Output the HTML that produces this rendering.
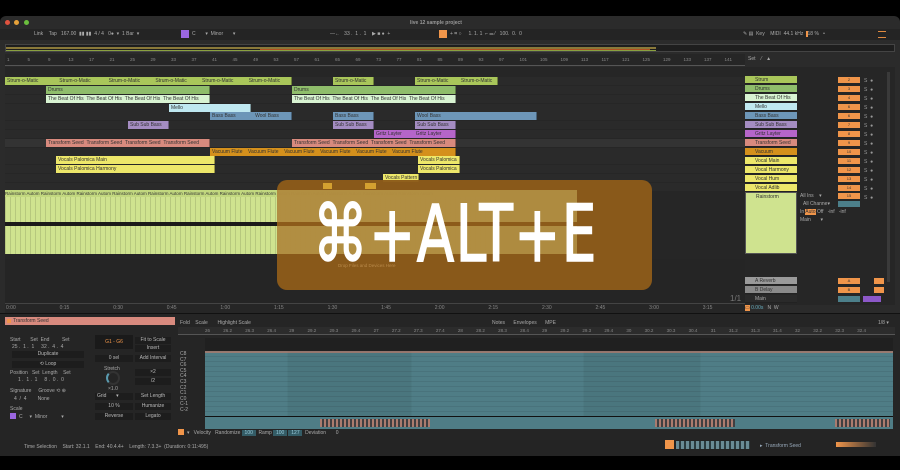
<!DOCTYPE html>
<html><head><meta charset="utf-8"><style>
*{margin:0;padding:0;box-sizing:border-box}
body{width:900px;height:470px;background:#000;position:relative;overflow:hidden;font-family:"Liberation Sans",sans-serif;font-size:5px;color:#bbb}
.a{position:absolute}
.c{position:absolute;height:8px;font-size:5px;line-height:8px;padding-left:2px;color:#333;white-space:nowrap;overflow:hidden;border-right:1px solid rgba(0,0,0,.35)}
.row{position:absolute;left:5px;width:740px;height:8px;background:#2a2a2a}
.th{position:absolute;left:745px;width:52px;height:8px;font-size:5px;line-height:8px;padding-left:10px;color:#333;border-bottom:1px solid #222}
.num{position:absolute;left:838px;width:22px;height:6px;background:#f0954a;color:#333;font-size:4px;text-align:center;line-height:6px}
.lbl{position:absolute;font-size:5px;color:#aaa;white-space:nowrap}
.btn{position:absolute;background:#1d1d1d;color:#bbb;font-size:5px;text-align:center;line-height:7px;height:7px}
.rl span{display:inline-block;width:20.5px}
.tl span{display:inline-block;width:53.6px}
</style></head><body>
<div class="a" style="left:0;top:16px;width:900px;height:440px;background:#2b2b2b;border-radius:6px 6px 0 0"></div>
<div class="a" style="left:5px;top:20px;width:5px;height:5px;border-radius:50%;background:#e0533f"></div>
<div class="a" style="left:14px;top:20px;width:5px;height:5px;border-radius:50%;background:#e6a23a"></div>
<div class="a" style="left:24px;top:20px;width:5px;height:5px;border-radius:50%;background:#6bbf3e"></div>
<div class="lbl" style="left:410px;top:20px;color:#999;font-weight:bold">live 12 sample project</div>
<div class="a" style="left:0;top:29px;width:900px;height:11px;background:#242424"></div>
<div class="lbl" style="left:34px;top:31px">Link&nbsp;&nbsp;&nbsp;&nbsp;Tap&nbsp;&nbsp;&nbsp;167.00&nbsp;&nbsp;▮▮ ▮▮&nbsp;&nbsp;4 / 4&nbsp;&nbsp;&nbsp;0●&nbsp;&nbsp;▾&nbsp;&nbsp;1 Bar&nbsp;&nbsp;▾</div>
<div class="a" style="left:181px;top:30px;width:8px;height:8px;background:#9a66e0"></div>
<div class="lbl" style="left:192px;top:31px">C&nbsp;&nbsp;&nbsp;&nbsp;&nbsp;&nbsp;&nbsp;▾&nbsp;&nbsp;Minor&nbsp;&nbsp;&nbsp;&nbsp;&nbsp;&nbsp;&nbsp;▾</div>
<div class="lbl" style="left:330px;top:31px">—←&nbsp;&nbsp;&nbsp;33 .&nbsp;&nbsp;1 .&nbsp;&nbsp;1&nbsp;&nbsp;&nbsp;&nbsp;▶&nbsp;■&nbsp;●&nbsp;&nbsp;+</div>
<div class="a" style="left:439px;top:30px;width:8px;height:8px;background:#f0954a"></div>
<div class="lbl" style="left:450px;top:31px">+ ⌗ ○&nbsp;&nbsp;&nbsp;&nbsp;&nbsp;1.&nbsp;1.&nbsp;1&nbsp;&nbsp;⌐ ▭ ⁄&nbsp;&nbsp;&nbsp;100.&nbsp;&nbsp;0.&nbsp;&nbsp;0</div>
<div class="lbl" style="left:743px;top:31px">✎ ▤&nbsp;&nbsp;Key&nbsp;&nbsp;&nbsp;&nbsp;MIDI&nbsp;&nbsp;44.1 kHz&nbsp;&nbsp;<span style="background:#f0954a">&nbsp;</span>18 %&nbsp;&nbsp;&nbsp;•</div>
<div class="a" style="left:878px;top:31px;width:8px;height:7px;border-top:1px solid #e08a40;border-bottom:1px solid #e08a40"></div>
<div class="a" style="left:5px;top:44px;width:890px;height:8px;background:#1e1e1e;border:1px solid #444"></div>
<div class="a" style="left:6px;top:47px;width:650px;height:2px;background:#8a7a3a"></div>
<div class="a" style="left:260px;top:49px;width:390px;height:1px;background:#b05020"></div>
<div class="a" style="left:6px;top:50px;width:650px;height:1px;background:#8aa040"></div>
<div class="a" style="left:5px;top:54px;width:740px;height:12px;background:#262626;border-bottom:1px solid #555"></div>
<div class="lbl rl" style="left:7px;top:57px;font-size:4.5px;color:#888"><span>1</span><span>5</span><span>9</span><span>13</span><span>17</span><span>21</span><span>25</span><span>29</span><span>33</span><span>37</span><span>41</span><span>45</span><span>49</span><span>53</span><span>57</span><span>61</span><span>65</span><span>69</span><span>73</span><span>77</span><span>81</span><span>85</span><span>89</span><span>93</span><span>97</span><span>101</span><span>105</span><span>109</span><span>113</span><span>117</span><span>121</span><span>125</span><span>129</span><span>133</span><span>137</span><span>141</span></div>
<div class="lbl" style="left:748px;top:56px">Set&nbsp;&nbsp;&nbsp;&nbsp;⁄&nbsp;&nbsp;&nbsp;▲</div>
<div class="a" style="left:5px;top:67px;width:740px;height:238px;background:#262626"></div>
<div class="row" style="top:77px"></div><div class="row" style="top:86px"></div><div class="row" style="top:95px"></div><div class="row" style="top:104px"></div><div class="row" style="top:112px"></div><div class="row" style="top:121px"></div><div class="row" style="top:130px"></div><div class="row" style="top:139px;background:#333"></div><div class="row" style="top:148px"></div><div class="row" style="top:156px"></div><div class="row" style="top:165px"></div><div class="row" style="top:174px"></div><div class="row" style="top:183px"></div>
<div class="row" style="top:259px;height:44px;background:#252525"></div>
<div class="c" style="top:77px;left:5px;width:287px;background:#a9c65a">Strum-o-Matic&nbsp;&nbsp;&nbsp;&nbsp;&nbsp;&nbsp;&nbsp;&nbsp;&nbsp;&nbsp;&nbsp;&nbsp;&nbsp;&nbsp;&nbsp;Strum-o-Matic&nbsp;&nbsp;&nbsp;&nbsp;&nbsp;&nbsp;&nbsp;&nbsp;&nbsp;&nbsp;&nbsp;&nbsp;&nbsp;Strum-o-Matic&nbsp;&nbsp;&nbsp;&nbsp;&nbsp;&nbsp;&nbsp;&nbsp;&nbsp;&nbsp;&nbsp;Strum-o-Matic&nbsp;&nbsp;&nbsp;&nbsp;&nbsp;&nbsp;&nbsp;&nbsp;&nbsp;&nbsp;&nbsp;Strum-o-Matic&nbsp;&nbsp;&nbsp;&nbsp;&nbsp;&nbsp;&nbsp;&nbsp;&nbsp;&nbsp;&nbsp;Strum-o-Matic&nbsp;&nbsp;&nbsp;&nbsp;&nbsp;&nbsp;&nbsp;&nbsp;&nbsp;&nbsp;&nbsp;Strum-o-Matic</div>
<div class="c" style="top:77px;left:333px;width:41px;background:#a9c65a">Strum-o-Matic</div>
<div class="c" style="top:77px;left:415px;width:83px;background:#a9c65a">Strum-o-Matic&nbsp;&nbsp;&nbsp;&nbsp;&nbsp;&nbsp;&nbsp;&nbsp;&nbsp;Strum-o-Matic</div>
<div class="c" style="top:86px;left:46px;width:164px;background:#8fbd6b">Drums</div>
<div class="c" style="top:86px;left:292px;width:164px;background:#8fbd6b">Drums</div>
<div class="c" style="top:95px;left:46px;width:164px;background:#d8f3d2">The Beat Of His&nbsp;&nbsp;The Beat Of His&nbsp;&nbsp;The Beat Of His&nbsp;&nbsp;The Beat Of His</div>
<div class="c" style="top:95px;left:292px;width:164px;background:#d8f3d2">The Beat Of His&nbsp;&nbsp;The Beat Of His&nbsp;&nbsp;The Beat Of His&nbsp;&nbsp;The Beat Of His</div>
<div class="c" style="top:104px;left:169px;width:82px;background:#bfe8f0">Mello</div>
<div class="c" style="top:112px;left:210px;width:82px;background:#6d96b8">Bass Bass&nbsp;&nbsp;&nbsp;&nbsp;&nbsp;&nbsp;&nbsp;&nbsp;&nbsp;&nbsp;&nbsp;&nbsp;&nbsp;&nbsp;Wool Bass</div>
<div class="c" style="top:112px;left:333px;width:41px;background:#6d96b8">Bass Bass</div>
<div class="c" style="top:112px;left:415px;width:122px;background:#6d96b8">Wool Bass</div>
<div class="c" style="top:121px;left:128px;width:41px;background:#a48cc2">Sub Sub Bass</div>
<div class="c" style="top:121px;left:333px;width:41px;background:#a48cc2">Sub Sub Bass</div>
<div class="c" style="top:121px;left:415px;width:41px;background:#a48cc2">Sub Sub Bass</div>
<div class="c" style="top:130px;left:374px;width:82px;background:#b565c9">Gritz Layter&nbsp;&nbsp;&nbsp;&nbsp;&nbsp;&nbsp;&nbsp;&nbsp;&nbsp;&nbsp;Gritz Layter</div>
<div class="c" style="top:139px;left:46px;width:164px;background:#d88a7e">Transform Seed&nbsp;&nbsp;Transform Seed&nbsp;&nbsp;Transform Seed&nbsp;&nbsp;Transform Seed</div>
<div class="c" style="top:139px;left:292px;width:164px;background:#d88a7e">Transform Seed&nbsp;&nbsp;Transform Seed&nbsp;&nbsp;Transform Seed&nbsp;&nbsp;Transform Seed</div>
<div class="c" style="top:148px;left:210px;width:246px;background:#d4901c">Vacuum Flute&nbsp;&nbsp;&nbsp;&nbsp;Vacuum Flute&nbsp;&nbsp;&nbsp;&nbsp;Vacuum Flute&nbsp;&nbsp;&nbsp;&nbsp;Vacuum Flute&nbsp;&nbsp;&nbsp;&nbsp;Vacuum Flute&nbsp;&nbsp;&nbsp;&nbsp;Vacuum Flute</div>
<div class="c" style="top:156px;left:56px;width:159px;background:#ede76a">Vocals Palomica Main</div>
<div class="c" style="top:156px;left:418px;width:42px;background:#ede76a">Vocals Palomica</div>
<div class="c" style="top:165px;left:56px;width:159px;background:#ede76a">Vocals Palomica Harmony</div>
<div class="c" style="top:165px;left:418px;width:42px;background:#ede76a">Vocals Palomica</div>
<div class="c" style="top:174px;left:383px;width:36px;background:#ede76a">Vocals Pattern</div>
<div class="a" style="left:5px;top:190px;width:495px;height:64px;background:#cfe38f;background-image:repeating-linear-gradient(90deg,rgba(0,0,0,.12) 0 1px,transparent 1px 5px)"></div>
<div class="a" style="left:5px;top:190px;width:495px;height:7px;background:#c2d87f;font-size:4.5px;color:#333;line-height:7px;white-space:nowrap;overflow:hidden">Rainstorm Autom Rainstorm Autom Rainstorm Autom Rainstorm Autom Rainstorm Autom Rainstorm Autom Rainstorm Autom Rainstorm Autom Rainstorm Autom Rainstorm Autom Rainstorm Autom Rainstorm Autom</div>
<div class="a" style="left:5px;top:222px;width:495px;height:4px;background:#1a1a1a"></div>
<div class="a" style="left:5px;top:303px;width:740px;height:10px;background:#262626;border-top:1px solid #444"></div>
<div class="lbl tl" style="left:6px;top:305px;color:#888"><span>0:00</span><span>0:15</span><span>0:30</span><span>0:45</span><span>1:00</span><span>1:15</span><span>1:30</span><span>1:45</span><span>2:00</span><span>2:15</span><span>2:30</span><span>2:45</span><span>3:00</span><span>3:15</span></div>
<div class="a" style="left:745px;top:67px;width:150px;height:238px;background:#262626"></div>
<div class="th" style="top:76px;background:#a9c65a">Strum</div>
<div class="th" style="top:85px;background:#8fbd6b">Drums</div>
<div class="th" style="top:94px;background:#d8f3d2">The Beat Of His</div>
<div class="th" style="top:103px;background:#bfe8f0">Mello</div>
<div class="th" style="top:112px;background:#6d96b8">Bass Bass</div>
<div class="th" style="top:121px;background:#a48cc2">Sub Sub Bass</div>
<div class="th" style="top:130px;background:#b565c9">Gritz Layter</div>
<div class="th" style="top:139px;background:#d88a7e">Transform Seed</div>
<div class="th" style="top:148px;background:#d4901c">Vacuum</div>
<div class="th" style="top:157px;background:#ede76a">Vocal Main</div>
<div class="th" style="top:166px;background:#ede76a">Vocal Harmony</div>
<div class="th" style="top:175px;background:#ede76a">Vocal Hum</div>
<div class="th" style="top:184px;background:#ede76a">Vocal Adlib</div>
<div class="th" style="top:192px;height:62px;background:#cfe38f;border:1px solid #555">Rainstorm</div>
<div class="num" style="top:77px">2</div><div class="num" style="top:86px">3</div><div class="num" style="top:95px">4</div><div class="num" style="top:104px">6</div><div class="num" style="top:113px">6</div><div class="num" style="top:122px">7</div><div class="num" style="top:131px">8</div><div class="num" style="top:140px">9</div><div class="num" style="top:149px">10</div><div class="num" style="top:158px">11</div><div class="num" style="top:167px">12</div><div class="num" style="top:176px">13</div><div class="num" style="top:185px">14</div><div class="num" style="top:193px">15</div>
<div class="lbl" style="left:864px;top:77px;line-height:9px;color:#999">S&nbsp;&nbsp;●<br>S&nbsp;&nbsp;●<br>S&nbsp;&nbsp;●<br>S&nbsp;&nbsp;●<br>S&nbsp;&nbsp;●<br>S&nbsp;&nbsp;●<br>S&nbsp;&nbsp;●<br>S&nbsp;&nbsp;●<br>S&nbsp;&nbsp;●<br>S&nbsp;&nbsp;●<br>S&nbsp;&nbsp;●<br>S&nbsp;&nbsp;●<br>S&nbsp;&nbsp;●<br>S&nbsp;&nbsp;●</div>
<div class="lbl" style="left:800px;top:193px">All Ins&nbsp;&nbsp;&nbsp;&nbsp;▾</div>
<div class="lbl" style="left:803px;top:201px">All Channe▾</div>
<div class="a" style="left:838px;top:201px;width:22px;height:6px;background:#4c7f8a"></div>
<div class="lbl" style="left:800px;top:209px">In <span style="background:#f0954a;color:#333">Auto</span> Off&nbsp;&nbsp;&nbsp;-inf&nbsp;&nbsp;&nbsp;-inf</div>
<div class="lbl" style="left:800px;top:217px">Main&nbsp;&nbsp;&nbsp;&nbsp;&nbsp;&nbsp;&nbsp;▾</div>
<div class="a" style="left:887px;top:72px;width:3px;height:210px;background:#3a3a3a"></div>
<div class="th" style="top:277px;background:#9a9a9a">A Reverb</div>
<div class="th" style="top:286px;background:#8a8a8a">B Delay</div>
<div class="lbl" style="left:730px;top:294px;font-size:8px;color:#777">1/1</div>
<div class="th" style="top:295px;background:#2a2a2a;color:#aaa">Main</div>
<div class="num" style="top:278px">A</div><div class="num" style="top:287px">B</div>
<div class="a" style="left:838px;top:296px;width:22px;height:6px;background:#4c7f8a"></div>
<div class="a" style="left:863px;top:296px;width:18px;height:6px;background:#8c58c8"></div>
<div class="a" style="left:874px;top:278px;width:10px;height:6px;background:#f0954a"></div>
<div class="a" style="left:874px;top:287px;width:10px;height:6px;background:#f0954a"></div>
<div class="lbl" style="left:745px;top:305px"><span style="background:#f0954a;color:#333">▭</span> <span style="color:#6ab">0.00s</span>&nbsp;&nbsp;&nbsp;N&nbsp;&nbsp;W</div>
<!-- overlay -->
<div class="a" style="left:277px;top:180px;width:375px;height:110px;background:#8c5b1a;border-radius:10px;opacity:.97"></div>
<div class="a" style="left:277px;top:190px;width:300px;height:64px;background:rgba(220,200,110,.45)"></div>
<div class="a" style="left:277px;top:222px;width:300px;height:4px;background:#8c5b1a"></div>
<div class="a" style="left:323px;top:183px;width:9px;height:6px;background:#d4a030"></div>
<div class="a" style="left:365px;top:183px;width:11px;height:6px;background:#d4a030"></div>
<div class="a" style="left:313px;top:185px;width:350px;font-size:78px;line-height:100px;color:#fff;font-family:'Liberation Sans Narrow','DejaVu Sans Condensed',sans-serif;transform:scaleX(.78);transform-origin:left;white-space:nowrap;letter-spacing:2px;-webkit-text-stroke:1.5px #fff">⌘+ALT+E</div>
<div class="lbl" style="left:338px;top:263px;color:#b98a4a;font-size:4.5px">Drop Files and Devices Here</div>
<!-- bottom panel -->
<div class="a" style="left:0;top:313px;width:900px;height:143px;background:#252525;border-top:1px solid #111"></div>
<div class="a" style="left:5px;top:317px;width:170px;height:8px;background:#d88a7e;font-size:5px;line-height:8px;color:#333;padding-left:8px">Transform Seed</div>
<div class="a" style="left:7px;top:319px;width:4px;height:4px;background:#f0954a"></div>
<div class="lbl" style="left:10px;top:337px">Start&nbsp;&nbsp;&nbsp;&nbsp;&nbsp;&nbsp;&nbsp;Set&nbsp;&nbsp;End&nbsp;&nbsp;&nbsp;&nbsp;&nbsp;&nbsp;&nbsp;&nbsp;&nbsp;Set</div>
<div class="lbl" style="left:12px;top:344px">25 .&nbsp;&nbsp;1 .&nbsp;&nbsp;1&nbsp;&nbsp;&nbsp;&nbsp;&nbsp;32 .&nbsp;&nbsp;4 .&nbsp;&nbsp;4</div>
<div class="btn" style="left:12px;top:351px;width:72px">Duplicate</div>
<div class="btn" style="left:12px;top:361px;width:72px">⟲ Loop</div>
<div class="lbl" style="left:10px;top:370px">Position&nbsp;&nbsp;&nbsp;Set&nbsp;&nbsp;Length&nbsp;&nbsp;&nbsp;&nbsp;Set</div>
<div class="lbl" style="left:18px;top:377px">1 .&nbsp;&nbsp;1 .&nbsp;&nbsp;1&nbsp;&nbsp;&nbsp;&nbsp;&nbsp;8 .&nbsp;&nbsp;0 .&nbsp;&nbsp;0</div>
<div class="lbl" style="left:10px;top:388px">Signature&nbsp;&nbsp;&nbsp;&nbsp;&nbsp;Groove ⟲ ⊕</div>
<div class="lbl" style="left:14px;top:396px">4&nbsp;&nbsp;/&nbsp;&nbsp;4&nbsp;&nbsp;&nbsp;&nbsp;&nbsp;&nbsp;&nbsp;&nbsp;None</div>
<div class="lbl" style="left:10px;top:406px">Scale</div>
<div class="a" style="left:10px;top:413px;width:6px;height:6px;background:#9a66e0"></div>
<div class="lbl" style="left:19px;top:414px">C&nbsp;&nbsp;&nbsp;&nbsp;&nbsp;▾&nbsp;&nbsp;Minor&nbsp;&nbsp;&nbsp;&nbsp;&nbsp;&nbsp;&nbsp;&nbsp;&nbsp;&nbsp;▾</div>
<div class="a" style="left:95px;top:335px;width:38px;height:14px;background:#1a1a1a;color:#f0954a;font-size:5px;text-align:center;line-height:14px">G1 - G6</div>
<div class="btn" style="left:135px;top:337px;width:36px">Fit to Scale</div>
<div class="btn" style="left:135px;top:345px;width:36px">Insert</div>
<div class="btn" style="left:95px;top:355px;width:38px">0 sel</div>
<div class="btn" style="left:135px;top:355px;width:36px">Add Interval</div>
<div class="lbl" style="left:104px;top:366px">Stretch</div>
<div class="a" style="left:106px;top:371px;width:14px;height:14px;border-radius:50%;border:2px solid #333;border-left-color:#5a9bb0"></div>
<div class="lbl" style="left:108px;top:386px">×1.0</div>
<div class="btn" style="left:135px;top:369px;width:36px">×2</div>
<div class="btn" style="left:135px;top:378px;width:36px">/2</div>
<div class="btn" style="left:95px;top:393px;width:38px;text-align:left;padding-left:2px">Grid&nbsp;&nbsp;&nbsp;&nbsp;&nbsp;&nbsp;&nbsp;▾</div>
<div class="btn" style="left:135px;top:393px;width:36px">Set Length</div>
<div class="btn" style="left:95px;top:403px;width:38px">10 %</div>
<div class="btn" style="left:135px;top:403px;width:36px">Humanize</div>
<div class="btn" style="left:95px;top:413px;width:38px">Reverse</div>
<div class="btn" style="left:135px;top:413px;width:36px">Legato</div>
<div class="lbl" style="left:180px;top:320px">Fold&nbsp;&nbsp;&nbsp;&nbsp;Scale&nbsp;&nbsp;&nbsp;&nbsp;&nbsp;&nbsp;&nbsp;Highlight Scale</div>
<div class="lbl" style="left:492px;top:320px">Notes&nbsp;&nbsp;&nbsp;&nbsp;&nbsp;&nbsp;Envelopes&nbsp;&nbsp;&nbsp;&nbsp;&nbsp;&nbsp;MPE</div>
<div class="lbl" style="left:878px;top:320px">1/8 ▾</div>
<div class="a" style="left:178px;top:327px;width:717px;height:8px;background:#2c2c2c;border-bottom:1px solid #555"></div>
<div class="lbl" style="left:205px;top:328px;color:#888;font-size:4.5px;word-spacing:12px">26 26.2 26.3 26.4 29 29.2 29.3 29.4 27 27.2 27.3 27.4 28 28.2 28.3 28.4 29 29.2 29.3 29.4 30 30.2 30.3 30.4 31 31.2 31.3 31.4 32 32.2 32.3 32.4</div>
<div class="a" style="left:205px;top:338px;width:688px;height:13px;background:#202020"></div>
<div class="lbl" style="left:180px;top:352px;line-height:5.6px;color:#aaa">C8<br>C7<br>C6<br>C5<br>C4<br>C3<br>C2<br>C1<br>C0<br>C-1<br>C-2</div>
<div class="a" style="left:205px;top:351px;width:688px;height:65px;background:#4f7d86;background-image:linear-gradient(90deg,transparent 0 12%,rgba(0,0,0,.06) 12% 30%,transparent 30% 55%,rgba(0,0,0,.06) 55% 72%,transparent 72%),repeating-linear-gradient(180deg,rgba(0,0,0,.08) 0 1px,transparent 1px 5px)"></div>
<div class="a" style="left:205px;top:351px;width:688px;height:2px;background:#c97a66;opacity:.6"></div>
<div class="a" style="left:205px;top:416px;width:688px;height:1px;background:#111"></div>
<div class="a" style="left:205px;top:417px;width:688px;height:12px;background:#4f7d86"></div>
<div class="a" style="left:320px;top:419px;width:110px;height:8px;background:repeating-linear-gradient(90deg,#c97a66 0 2px,#3a2a2a 2px 4px);opacity:.75"></div>
<div class="a" style="left:655px;top:419px;width:80px;height:8px;background:repeating-linear-gradient(90deg,#c97a66 0 2px,#3a2a2a 2px 4px);opacity:.75"></div>
<div class="a" style="left:835px;top:419px;width:55px;height:8px;background:repeating-linear-gradient(90deg,#c97a66 0 2px,#3a2a2a 2px 4px);opacity:.75"></div>
<div class="a" style="left:178px;top:429px;width:6px;height:6px;background:#f0954a"></div>
<div class="lbl" style="left:187px;top:430px">▾&nbsp;&nbsp;&nbsp;Velocity&nbsp;&nbsp;&nbsp;Randomize <span style="background:#345c66;color:#9cd">&nbsp;&nbsp;100&nbsp;&nbsp;</span>&nbsp;&nbsp;Ramp <span style="background:#345c66;color:#9cd">&nbsp;&nbsp;100&nbsp;&nbsp;</span> <span style="background:#345c66;color:#9cd">&nbsp;&nbsp;127&nbsp;&nbsp;</span>&nbsp;&nbsp;Deviation&nbsp;&nbsp;&nbsp;&nbsp;&nbsp;&nbsp;&nbsp;0</div>
<div class="a" style="left:0;top:440px;width:900px;height:16px;background:#242424"></div>
<div class="lbl" style="left:24px;top:444px">Time Selection&nbsp;&nbsp;&nbsp;&nbsp;Start: 32.1.1&nbsp;&nbsp;&nbsp;&nbsp;End: 40.4.4+&nbsp;&nbsp;&nbsp;&nbsp;Length: 7.3.3+&nbsp;&nbsp;(Duration: 0:11:495)</div>
<div class="a" style="left:665px;top:440px;width:9px;height:9px;background:#f0954a"></div>
<div class="a" style="left:676px;top:441px;width:74px;height:8px;background:repeating-linear-gradient(90deg,#6a8c96 0 3px,#2a3a3e 3px 5px)"></div>
<div class="lbl" style="left:760px;top:443px;color:#9ab">▸&nbsp;&nbsp;Transform Seed</div>
<div class="a" style="left:836px;top:442px;width:40px;height:5px;background:linear-gradient(90deg,#f0954a,#333)"></div>
</body></html>
